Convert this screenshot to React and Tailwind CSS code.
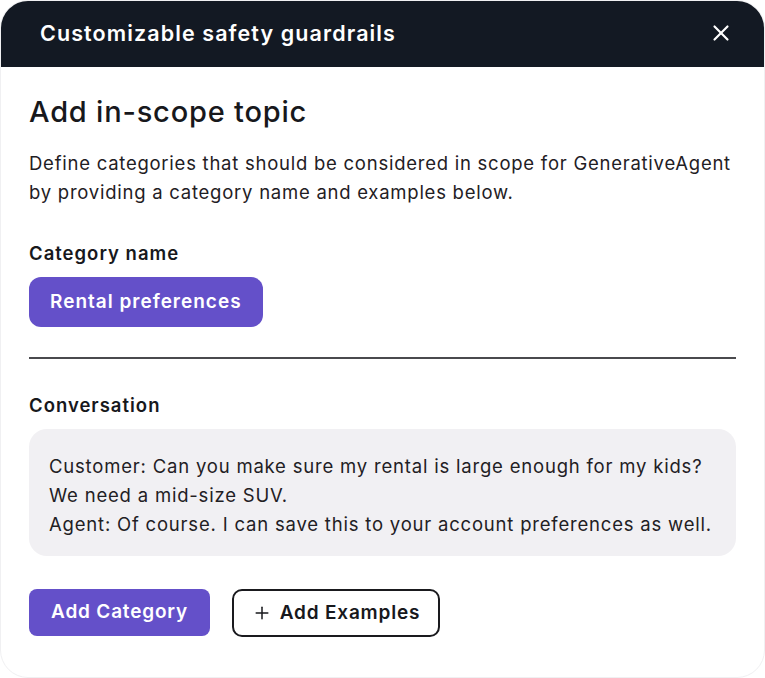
import { X, Plus } from 'lucide-react';

const App = () => {
  return (
    <div className="w-[765px] h-[678px] bg-white font-['Inter','Noto_Sans',sans-serif]">
      <div className="h-[678px] rounded-[28px] overflow-hidden border border-[#f0f0f2] bg-white flex flex-col">
        {/* Header */}
        <div className="h-[66px] bg-[#131923] flex items-center justify-between pl-[39px] pr-[30px] shrink-0">
          <h2 className="text-white text-[21.5px] font-semibold tracking-[1.1px] -mt-[2px]">Customizable safety guardrails</h2>
          <X className="w-[26px] h-[26px] text-white -mt-[2px]" strokeWidth={2} />
        </div>

        {/* Body */}
        <div className="px-[28px] pt-[26px] flex flex-col">
          <h1 className="text-[29px] font-medium text-[#17181c] leading-[38px] tracking-[0.8px]">Add in-scope topic</h1>
          <p className="mt-[18px] text-[18.5px] leading-[29px] text-[#1f2024] tracking-[0.75px] whitespace-nowrap">
            Define categories that should be considered in scope for GenerativeAgent
            <br />
            by providing a category name and examples below.
          </p>

          <div className="mt-[33px] text-[18.5px] font-semibold text-[#17181c] leading-[26px] tracking-[1px]">Category name</div>
          <div className="mt-[11px]">
            <span className="inline-flex items-center h-[50px] px-[21px] rounded-[12px] bg-[#6450c9] text-white text-[19px] font-semibold tracking-[1px]">
              Rental preferences
            </span>
          </div>

          <div className="mt-[30px] h-[2px] bg-[#4a4a4e]" />

          <div className="mt-[33px] text-[18.5px] font-semibold text-[#17181c] leading-[26px] tracking-[1px]">Conversation</div>
          <div className="mt-[11px] rounded-[18px] bg-[#f1f0f3] px-[20px] pt-[23px] pb-[17px] text-[18.5px] leading-[29px] text-[#1f2024] tracking-[0.8px] whitespace-nowrap">
            <div>Customer: Can you make sure my rental is large enough for my kids?</div>
            <div>We need a mid-size SUV.</div>
            <div>Agent: Of course. I can save this to your account preferences as well.</div>
          </div>

          <div className="mt-[33px] flex gap-[22px]">
            <button className="h-[47px] w-[181px] rounded-[8px] bg-[#6450c9] text-white text-[19px] font-semibold tracking-[0.8px]">
              Add Category
            </button>
            <button className="h-[48px] w-[208px] rounded-[10px] border-2 border-[#1a1a1e] bg-white text-[#17181c] text-[19px] font-semibold tracking-[0.8px] flex items-center justify-center gap-[8px]">
              <Plus className="w-[20px] h-[20px]" strokeWidth={1.8} />
              Add Examples
            </button>
          </div>
        </div>
      </div>
    </div>
  );
};

export default App;
